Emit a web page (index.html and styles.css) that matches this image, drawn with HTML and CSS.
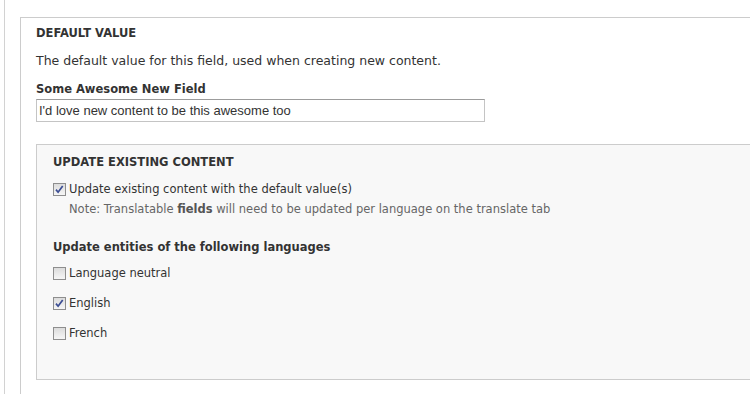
FILE: index.html
```html
<!DOCTYPE html>
<html lang="en">
<head>
    <meta charset="UTF-8">
    <meta name="viewport" content="width=device-width, initial-scale=1.0">
    <title>Field settings</title>
    <link rel="stylesheet" href="styles.css">
</head>
<body>

    <div class="page">
        <div class="field-group">
            <h2 class="group-title">DEFAULT VALUE</h2>
            <p class="group-desc">The default value for this field, used when creating new content.</p>

            <label class="field-label" for="awesomeField">Some Awesome New Field</label>
            <input class="text-input" id="awesomeField" type="text" value="I'd love new content to be this awesome too">

            <!-- Update existing -->
            <div class="update-box">
                <h3 class="box-title">UPDATE EXISTING CONTENT</h3>

                <div class="check-row first-row">
                    <span class="checkbox">
                        <svg viewBox="0 0 11 11" width="11" height="11"><path d="M2 5.6l2.1 2.6 4.6-6.3" fill="none" stroke="#3b4d93" stroke-width="1.7"/></svg>
                    </span>
                    <span class="check-label">Update existing content with the default value(s)</span>
                </div>
                <div class="note">Note: Translatable <b>fields</b> will need to be updated per language on the translate tab</div>

                <h4 class="sub-title">Update entities of the following languages</h4>

                <div class="check-row lang-row">
                    <span class="checkbox"></span>
                    <span class="check-label">Language neutral</span>
                </div>
                <div class="check-row lang-row">
                    <span class="checkbox">
                        <svg viewBox="0 0 11 11" width="11" height="11"><path d="M2 5.6l2.1 2.6 4.6-6.3" fill="none" stroke="#3b4d93" stroke-width="1.7"/></svg>
                    </span>
                    <span class="check-label">English</span>
                </div>
                <div class="check-row lang-row">
                    <span class="checkbox"></span>
                    <span class="check-label">French</span>
                </div>
            </div>
        </div>
    </div>

</body>
</html>
```

FILE: styles.css
```css
body {
    margin: 0;
    background-color: #fff;
    color: #333;
    font-family: 'DejaVu Sans', Verdana, sans-serif;
    overflow: hidden;
}
.page {
    box-sizing: border-box;
    height: 100vh;
    margin-left: 4px;
    padding: 17px 0 0 15px;
    border-left: 1px solid #d2d2d2;
}
.field-group {
    height: 100%;
    padding: 7px 0 0 15px;
    border-top: 1px solid #ccc;
    border-left: 1px solid #ccc;
}
.group-title {
    margin: 0;
    font-size: 11.5px;
    line-height: 16px;
    font-weight: bold;
}
.group-desc {
    margin: 11px 0 0;
    font-size: 12.5px;
    line-height: 18px;
}
.field-label {
    display: block;
    margin-top: 11px;
    font-size: 11.5px;
    line-height: 16px;
    font-weight: bold;
}
.text-input {
    display: block;
    box-sizing: border-box;
    width: 449px;
    height: 23px;
    margin-top: 2px;
    padding: 0 2px;
    border: 1px solid #c4c4c4;
    border-top-color: #9c9c9c;
    font-family: 'Liberation Sans', Arial, sans-serif;
    font-size: 13px;
    color: #333;
}
.update-box {
    margin-top: 22px;
    height: 236px;
    padding: 9px 0 0 16px;
    background-color: #f8f8f8;
    border: 1px solid #ccc;
    border-right: none;
    box-sizing: border-box;
}
.box-title {
    margin: 0;
    font-size: 11.5px;
    line-height: 16px;
    font-weight: bold;
}
.check-row {
    display: flex;
    align-items: center;
    font-size: 11.5px;
    line-height: 16px;
}
.first-row {
    margin-top: 11px;
}
.checkbox {
    box-sizing: border-box;
    width: 13px;
    height: 13px;
    margin-right: 3px;
    border: 1px solid #8e8e8e;
    background: linear-gradient(#dcdcdc, #f6f6f6);
    flex-shrink: 0;
}
.checkbox svg {
    display: block;
}
.note {
    margin: 4px 0 0 16px;
    font-size: 11.5px;
    line-height: 16px;
    color: #666;
}
.note b {
    color: #555;
}
.sub-title {
    margin: 22px 0 0;
    font-size: 11.5px;
    line-height: 16px;
    font-weight: bold;
}
.lang-row {
    margin-top: 14px;
}
.sub-title + .lang-row {
    margin-top: 10px;
}
```
